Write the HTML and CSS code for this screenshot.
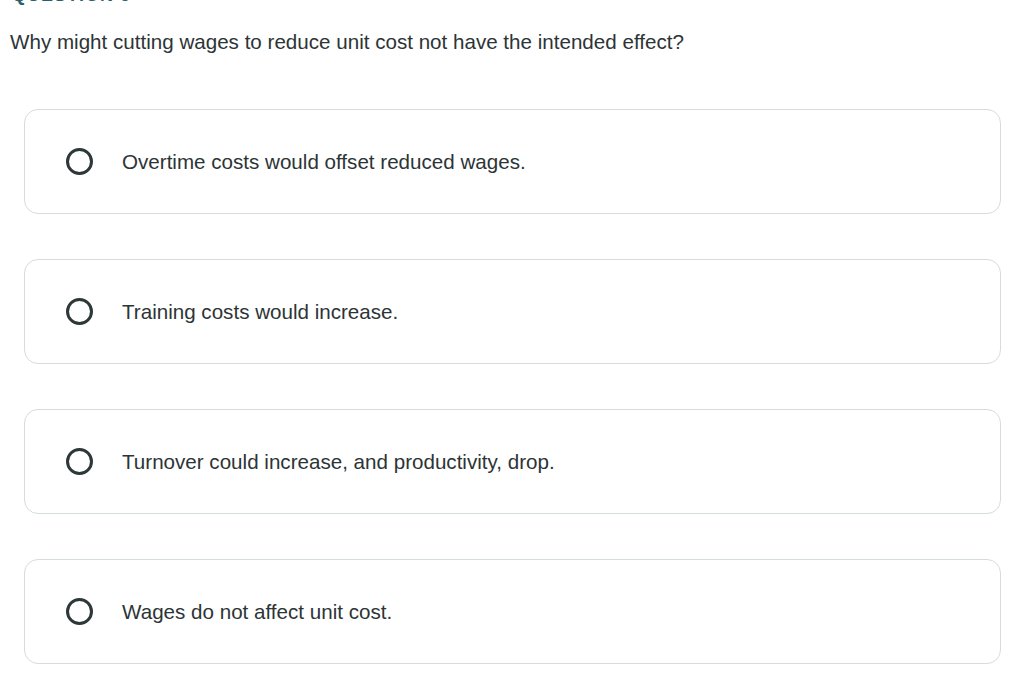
FILE: index.html
```html
<!DOCTYPE html>
<html lang="en">
<head>
  <meta charset="UTF-8" />
  <title>Question 5</title>
  <link rel="stylesheet" href="styles.css">
</head>
<body>

  <div class="quiz">
    <h3 class="quiz-label">QUESTION 5</h3>
    <p class="quiz-question">Why might cutting wages to reduce unit cost not have the intended effect?</p>

    <ul class="choices">
      <li class="choice">
        <span class="radio"></span>
        <span class="choice-text">Overtime costs would offset reduced wages.</span>
      </li>
      <li class="choice">
        <span class="radio"></span>
        <span class="choice-text">Training costs would increase.</span>
      </li>
      <li class="choice">
        <span class="radio"></span>
        <span class="choice-text">Turnover could increase, and productivity, drop.</span>
      </li>
      <li class="choice">
        <span class="radio"></span>
        <span class="choice-text">Wages do not affect unit cost.</span>
      </li>
    </ul>
  </div>

</body>
</html>
```

FILE: styles.css
```css
body {
  font-family: "Liberation Sans", Arial, sans-serif;
  background: #ffffff;
  color: #2d3436;
  margin: 0;
}
.quiz {
  padding: 0 23px 0 10px;
}
.quiz-label {
  margin: -14px 0 0 2px;
  font-size: 18px;
  line-height: 18px;
  letter-spacing: 1px;
  color: #2c5f6b;
}
.quiz-question {
  margin: 25px 0 0 0;
  font-size: 20.6px;
  line-height: 26px;
}
.choices {
  list-style: none;
  margin: 54px 0 0 14px;
  padding: 0;
}
.choice {
  display: flex;
  align-items: center;
  height: 103px;
  margin-bottom: 45px;
  border: 1px solid #d5dcdc;
  border-radius: 14px;
  padding-left: 41px;
}
.radio {
  width: 21px;
  height: 21px;
  border: 3px solid #2f3838;
  border-radius: 50%;
  flex-shrink: 0;
}
.choice-text {
  margin-left: 29px;
  font-size: 20.6px;
}
```
